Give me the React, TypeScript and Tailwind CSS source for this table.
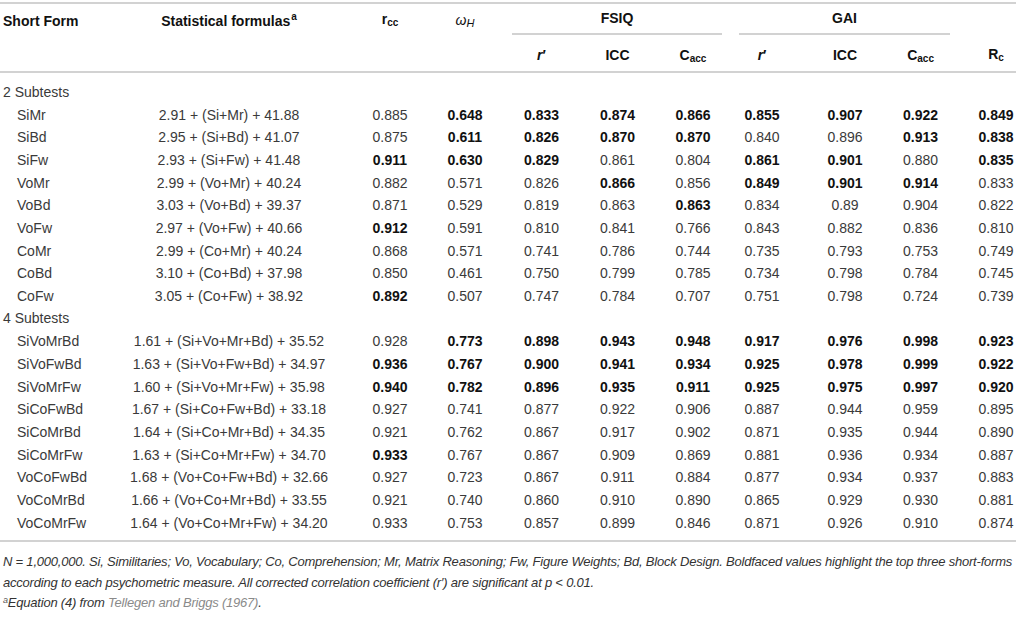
import React from "react";

type Row = { name: string; formula: string; vals: string[] };

const twoRows: Row[] = [
  { name: "SiMr", formula: "2.91 + (Si+Mr) + 41.88", vals: ["0.885", "0.648*", "0.833*", "0.874*", "0.866*", "0.855*", "0.907*", "0.922*", "0.849*"] },
  { name: "SiBd", formula: "2.95 + (Si+Bd) + 41.07", vals: ["0.875", "0.611*", "0.826*", "0.870*", "0.870*", "0.840", "0.896", "0.913*", "0.838*"] },
  { name: "SiFw", formula: "2.93 + (Si+Fw) + 41.48", vals: ["0.911*", "0.630*", "0.829*", "0.861", "0.804", "0.861*", "0.901*", "0.880", "0.835*"] },
  { name: "VoMr", formula: "2.99 + (Vo+Mr) + 40.24", vals: ["0.882", "0.571", "0.826", "0.866*", "0.856", "0.849*", "0.901*", "0.914*", "0.833"] },
  { name: "VoBd", formula: "3.03 + (Vo+Bd) + 39.37", vals: ["0.871", "0.529", "0.819", "0.863", "0.863*", "0.834", "0.89", "0.904", "0.822"] },
  { name: "VoFw", formula: "2.97 + (Vo+Fw) + 40.66", vals: ["0.912*", "0.591", "0.810", "0.841", "0.766", "0.843", "0.882", "0.836", "0.810"] },
  { name: "CoMr", formula: "2.99 + (Co+Mr) + 40.24", vals: ["0.868", "0.571", "0.741", "0.786", "0.744", "0.735", "0.793", "0.753", "0.749"] },
  { name: "CoBd", formula: "3.10 + (Co+Bd) + 37.98", vals: ["0.850", "0.461", "0.750", "0.799", "0.785", "0.734", "0.798", "0.784", "0.745"] },
  { name: "CoFw", formula: "3.05 + (Co+Fw) + 38.92", vals: ["0.892*", "0.507", "0.747", "0.784", "0.707", "0.751", "0.798", "0.724", "0.739"] },
];

const fourRows: Row[] = [
  { name: "SiVoMrBd", formula: "1.61 + (Si+Vo+Mr+Bd) + 35.52", vals: ["0.928", "0.773*", "0.898*", "0.943*", "0.948*", "0.917*", "0.976*", "0.998*", "0.923*"] },
  { name: "SiVoFwBd", formula: "1.63 + (Si+Vo+Fw+Bd) + 34.97", vals: ["0.936*", "0.767*", "0.900*", "0.941*", "0.934*", "0.925*", "0.978*", "0.999*", "0.922*"] },
  { name: "SiVoMrFw", formula: "1.60 + (Si+Vo+Mr+Fw) + 35.98", vals: ["0.940*", "0.782*", "0.896*", "0.935*", "0.911*", "0.925*", "0.975*", "0.997*", "0.920*"] },
  { name: "SiCoFwBd", formula: "1.67 + (Si+Co+Fw+Bd) + 33.18", vals: ["0.927", "0.741", "0.877", "0.922", "0.906", "0.887", "0.944", "0.959", "0.895"] },
  { name: "SiCoMrBd", formula: "1.64 + (Si+Co+Mr+Bd) + 34.35", vals: ["0.921", "0.762", "0.867", "0.917", "0.902", "0.871", "0.935", "0.944", "0.890"] },
  { name: "SiCoMrFw", formula: "1.63 + (Si+Co+Mr+Fw) + 34.70", vals: ["0.933*", "0.767", "0.867", "0.909", "0.869", "0.881", "0.936", "0.934", "0.887"] },
  { name: "VoCoFwBd", formula: "1.68 + (Vo+Co+Fw+Bd) + 32.66", vals: ["0.927", "0.723", "0.867", "0.911", "0.884", "0.877", "0.934", "0.937", "0.883"] },
  { name: "VoCoMrBd", formula: "1.66 + (Vo+Co+Mr+Bd) + 33.55", vals: ["0.921", "0.740", "0.860", "0.910", "0.890", "0.865", "0.929", "0.930", "0.881"] },
  { name: "VoCoMrFw", formula: "1.64 + (Vo+Co+Mr+Fw) + 34.20", vals: ["0.933", "0.753", "0.857", "0.899", "0.846", "0.871", "0.926", "0.910", "0.874"] },
];

const valPad = ["", "", "", "", "pl-[4px]", "pr-[6px]", "pl-[4px]", "", "pl-[18px]"];

function DataRow({ r }: { r: Row }) {
  return (
    <tr className="h-[22.68px]">
      <td className="pl-[17px] text-left text-[#3a3a3a] whitespace-nowrap">{r.name}</td>
      <td className="pr-[25px] text-center text-[#3a3a3a] whitespace-nowrap">{r.formula}</td>
      {r.vals.map((v, i) => {
        const bold = v.endsWith("*");
        const txt = bold ? v.slice(0, -1) : v;
        return (
          <td
            key={i}
            className={`text-center whitespace-nowrap ${valPad[i]} ${bold ? "font-bold text-[#111]" : "text-[#3a3a3a]"}`}
          >
            {txt}
          </td>
        );
      })}
    </tr>
  );
}

function SectionRow({ label, first }: { label: string; first?: boolean }) {
  return (
    <tr className={first ? "h-[31.7px]" : "h-[22.68px]"}>
      <td colSpan={11} className="pl-[3px] text-left align-bottom pb-[3px] text-[#3a3a3a]">
        {label}
      </td>
    </tr>
  );
}

export default function App() {
  return (
    <div
      className="w-[1016px] h-[617px] bg-white overflow-hidden pt-[2px]"
      style={{ fontFamily: '"Liberation Sans", Arial, sans-serif' }}
    >
      <table className="w-[1016px] table-fixed border-collapse text-[14px] leading-[17px]">
        <colgroup>
          <col className="w-[130px]" />
          <col className="w-[223px]" />
          <col className="w-[74px]" />
          <col className="w-[76px]" />
          <col className="w-[77px]" />
          <col className="w-[75px]" />
          <col className="w-[72px]" />
          <col className="w-[76px]" />
          <col className="w-[80px]" />
          <col className="w-[75px]" />
          <col className="w-[58px]" />
        </colgroup>
        <thead className="border-y-2 border-[#d2d2d2] text-[#111]">
          <tr className="h-[33px]">
            <th rowSpan={2} className="align-top pt-[9px] pl-[3px] text-left font-bold">
              Short Form
            </th>
            <th rowSpan={2} className="align-top pt-[9px] pr-[25px] text-center font-bold">
              Statistical formulas<sup className="text-[10px] relative -top-[6px] ml-[1px]">a</sup>
            </th>
            <th rowSpan={2} className="align-top pt-[7px] text-center font-bold">
              r<sub className="text-[10px] relative top-[2px]">cc</sub>
            </th>
            <th rowSpan={2} className="align-top pt-[8px] text-center font-normal">
              <span className="italic">ω</span>
              <sub className="italic text-[11px] relative top-[2px]">H</sub>
            </th>
            <th colSpan={3} className="align-top pt-[6px] pl-[9px] pr-[5px] font-bold">
              <div className="h-[17px] text-center">FSIQ</div>
              <div className="mt-[6px] h-[2px] bg-[#d2d2d2]" />
            </th>
            <th colSpan={3} className="align-top pt-[6px] pl-[12px] pr-[8px] font-bold">
              <div className="h-[17px] text-center">GAI</div>
              <div className="mt-[6px] h-[2px] bg-[#d2d2d2]" />
            </th>
            <th rowSpan={2} className="align-bottom pb-[8px] pl-[18px] text-center font-bold">
              R<sub className="text-[10px] relative top-[2px]">c</sub>
            </th>
          </tr>
          <tr className="h-[36px]">
            <th className="align-top pt-[11px] text-center font-bold">
              <span className="italic">r</span>′
            </th>
            <th className="align-top pt-[11px] text-center font-bold">ICC</th>
            <th className="align-top pt-[11px] pl-[4px] text-center font-bold">
              C<sub className="text-[10px] relative top-[2px]">acc</sub>
            </th>
            <th className="align-top pt-[11px] pr-[6px] text-center font-bold">
              <span className="italic">r</span>′
            </th>
            <th className="align-top pt-[11px] pl-[4px] text-center font-bold">ICC</th>
            <th className="align-top pt-[11px] text-center font-bold">
              C<sub className="text-[10px] relative top-[2px]">acc</sub>
            </th>
          </tr>
        </thead>
        <tbody className="border-b-2 border-[#d2d2d2]">
          <SectionRow label="2 Subtests" first />
          {twoRows.map((r) => (
            <DataRow key={r.name} r={r} />
          ))}
          <SectionRow label="4 Subtests" />
          {fourRows.map((r) => (
            <DataRow key={r.name} r={r} />
          ))}
          <tr className="h-[7px]">
            <td colSpan={11} />
          </tr>
        </tbody>
      </table>
      <div className="pl-[3px] pt-[9px] text-[13px] leading-[21px] italic text-[#333] whitespace-nowrap tracking-[-0.21px]">
        <div>
          N = 1,000,000. Si, Similitaries; Vo, Vocabulary; Co, Comprehension; Mr, Matrix Reasoning; Fw, Figure Weights; Bd, Block Design. Boldfaced values highlight the top three short-forms
        </div>
        <div>
          according to each psychometric measure. All corrected correlation coefficient (r′) are significant at p &lt; 0.01.
        </div>
        <div className="leading-[19px]">
          <sup className="text-[9px] text-[#555]">a</sup>Equation (4) from <span className="text-[#8a8a8a]">Tellegen and Briggs (1967)</span>.
        </div>
      </div>
    </div>
  );
}
